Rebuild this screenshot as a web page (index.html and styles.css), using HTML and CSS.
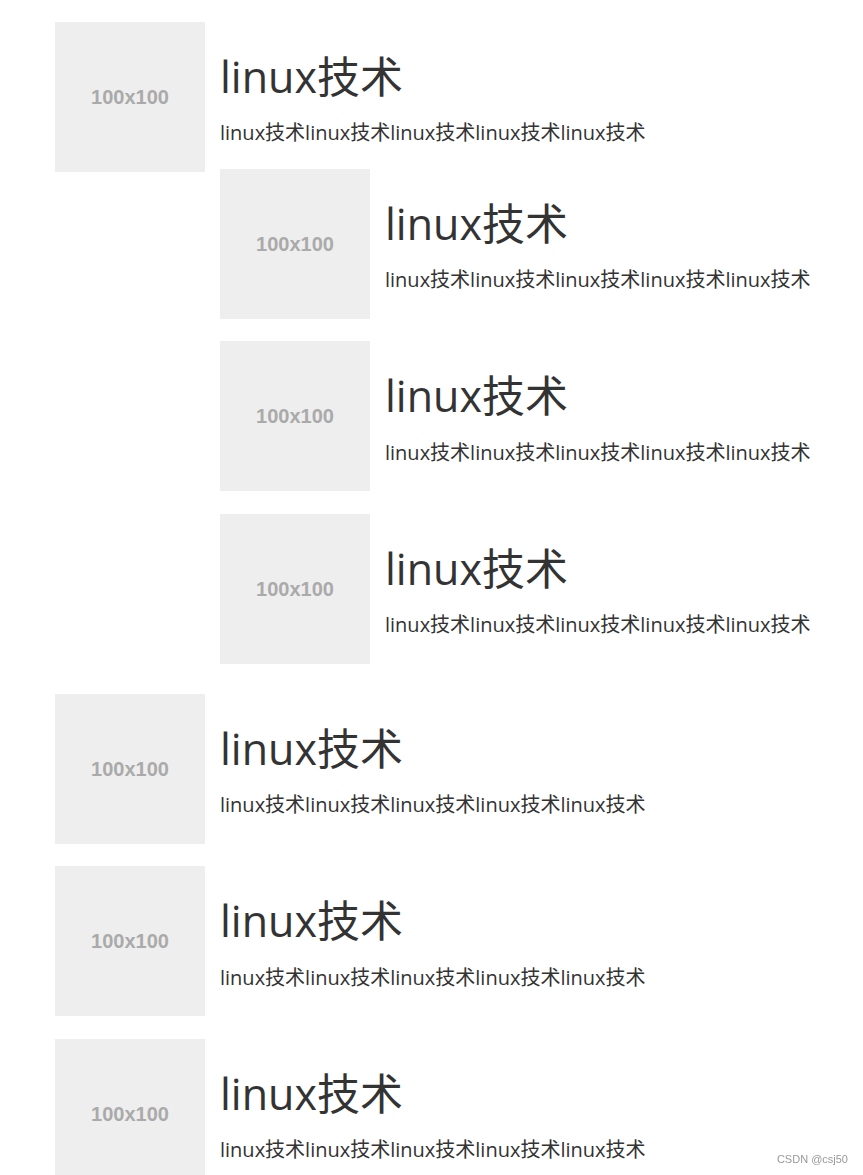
FILE: index.html
```
<!DOCTYPE html>
<html lang="zh-CN">
<head>
    <meta charset="UTF-8">
    <title>media</title>
    <link rel="stylesheet" href="styles.css">
</head>
<body>
    <div class="list">
        <div class="media media-parent">
            <div class="media-left"><div class="thumb">100x100</div></div>
            <div class="media-body">
                <h2 class="media-heading">linux技术</h2>
                <p>linux技术linux技术linux技术linux技术linux技术</p>

                <div class="media">
                    <div class="media-left"><div class="thumb">100x100</div></div>
                    <div class="media-body">
                        <h2 class="media-heading">linux技术</h2>
                        <p>linux技术linux技术linux技术linux技术linux技术</p>
                    </div>
                </div>
                <div class="media">
                    <div class="media-left"><div class="thumb">100x100</div></div>
                    <div class="media-body">
                        <h2 class="media-heading">linux技术</h2>
                        <p>linux技术linux技术linux技术linux技术linux技术</p>
                    </div>
                </div>
                <div class="media">
                    <div class="media-left"><div class="thumb">100x100</div></div>
                    <div class="media-body">
                        <h2 class="media-heading">linux技术</h2>
                        <p>linux技术linux技术linux技术linux技术linux技术</p>
                    </div>
                </div>
            </div>
        </div>

        <div class="media">
            <div class="media-left"><div class="thumb">100x100</div></div>
            <div class="media-body">
                <h2 class="media-heading">linux技术</h2>
                <p>linux技术linux技术linux技术linux技术linux技术</p>
            </div>
        </div>
        <div class="media">
            <div class="media-left"><div class="thumb">100x100</div></div>
            <div class="media-body">
                <h2 class="media-heading">linux技术</h2>
                <p>linux技术linux技术linux技术linux技术linux技术</p>
            </div>
        </div>
        <div class="media">
            <div class="media-left"><div class="thumb">100x100</div></div>
            <div class="media-body">
                <h2 class="media-heading">linux技术</h2>
                <p>linux技术linux技术linux技术linux技术linux技术</p>
            </div>
        </div>
    </div>

    <div class="watermark">CSDN @csj50</div>
</body>
</html>
```

FILE: styles.css
```
* {
    margin: 0;
    padding: 0;
    box-sizing: border-box;
}

body {
    background: #fff;
    color: #333;
    font-family: 'Open Sans', 'Noto Sans CJK SC', sans-serif;
    font-size: 20px;
    line-height: 1.5;
}

.list {
    padding: 22px 0 0 55px;
}

.media {
    display: flex;
    align-items: flex-start;
}

.media + .media {
    margin-top: 22.5px;
}

.media-parent {
    padding-bottom: 7.5px;
}

.media-body .media:first-of-type {
    margin-top: 20.5px;
}

.media-left {
    padding-right: 15px;
    flex-shrink: 0;
}

.thumb {
    width: 150px;
    height: 150px;
    background: #eee;
    color: #aaa;
    font-family: 'Liberation Sans', Arial, sans-serif;
    font-weight: bold;
    font-size: 20px;
    display: flex;
    align-items: center;
    justify-content: center;
}

.media-body {
    flex: 1;
}

.media-heading {
    font-weight: normal;
    font-size: 43px;
    line-height: 1.1;
    margin: 31px 0 18px;
}

.media-body p {
    margin-bottom: 0;
}

.watermark {
    position: fixed;
    right: 15px;
    bottom: 8px;
    font-family: 'Liberation Sans', Arial, sans-serif;
    font-size: 11px;
    color: #999;
}
```
